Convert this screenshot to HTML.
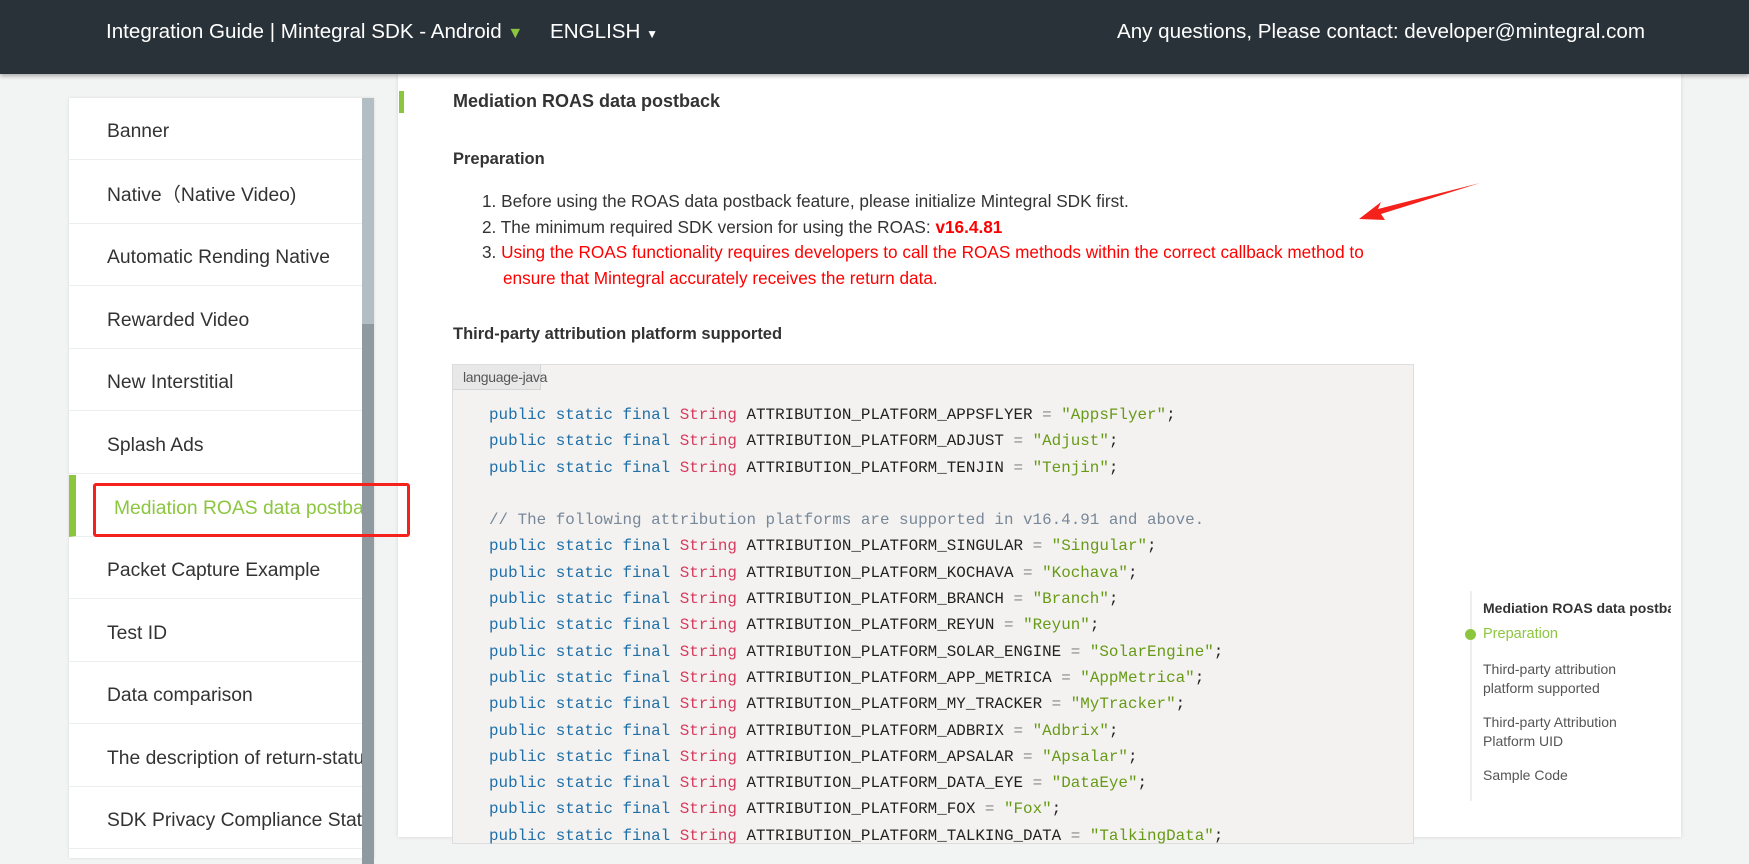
<!DOCTYPE html>
<html><head><meta charset="utf-8"><style>
*{margin:0;padding:0;box-sizing:border-box}
body{width:1749px;height:837px;overflow:hidden;background:#f2f3f3;font-family:"Liberation Sans",Arial,sans-serif;position:relative}
.hdr{position:absolute;left:0;top:0;width:1749px;height:74px;background:#283238;box-shadow:0 2px 4px rgba(0,0,0,.3);color:#fff;font-size:20.6px;z-index:5}
.hdr span{position:absolute;top:20px;white-space:nowrap}
.side{position:absolute;left:69px;top:98px;width:305px;height:760px;background:#fff;box-shadow:0 0 3px rgba(0,0,0,.1)}
.side .it{position:absolute;left:0;width:293px;height:62px;border-bottom:1px solid #eceeee;font-size:19.3px;color:#333;padding-left:38px;padding-top:3px;line-height:62px;white-space:nowrap;overflow:hidden}
.sb1{position:absolute;left:293px;top:0;width:12px;height:226px;background:#b3bec4}
.sb2{position:absolute;left:293px;top:226px;width:12px;height:540px;background:#8f9aa0}
.main{position:absolute;left:398px;top:74px;width:1283px;height:763px;background:#fff;box-shadow:0 0 4px rgba(0,0,0,.12)}
.t{position:absolute;white-space:nowrap;color:#333}
.code{position:absolute;left:452px;top:364px;width:962px;height:480px;background:#f4f2f0;border:1px solid #ddd}
.tag{position:absolute;left:0;top:0;width:88px;height:25px;background:#e8e8e8;border-right:1px solid #d5d5d5;border-bottom:1px solid #d5d5d5;font-size:14px;color:#555;line-height:24px;padding-left:10px;white-space:nowrap;letter-spacing:-.3px}
pre{position:absolute;left:36px;top:37px;font-family:"Liberation Mono",monospace;font-size:15.9px;line-height:26.3px;color:#222}
.k{color:#1f6fa8}.s{color:#d73a5e}.g{color:#679a17}.c{color:#778899}.o{color:#888}
.toc{position:absolute;font-size:14px;color:#555;white-space:nowrap}
</style></head><body>
<div class="hdr">
<span style="left:106px">Integration Guide | Mintegral SDK - Android <span style="position:static;color:#8cc63f;font-size:16px">▼</span></span>
<span style="left:550px">ENGLISH <span style="position:static;font-size:12px">▼</span></span>
<span style="right:104px">Any questions, Please contact: developer@mintegral.com</span>
</div>

<div class="side">
<div class="it" style="top:0">Banner</div>
<div class="it" style="top:64px">Native（Native Video)</div>
<div class="it" style="top:126px">Automatic Rending Native</div>
<div class="it" style="top:189px">Rewarded Video</div>
<div class="it" style="top:251px">New Interstitial</div>
<div class="it" style="top:314px">Splash Ads</div>
<div class="it" style="top:377px;color:#8cc63f;padding-left:38px;border-left:7px solid #8cc63f">Mediation ROAS data postback</div>
<div class="it" style="top:439px">Packet Capture Example</div>
<div class="it" style="top:502px">Test ID</div>
<div class="it" style="top:564px">Data comparison</div>
<div class="it" style="top:627px">The description of return-status</div>
<div class="it" style="top:689px">SDK Privacy Compliance Statement</div>
<div class="sb1"></div><div class="sb2"></div>
</div>
<div style="position:absolute;left:93px;top:483px;width:317px;height:54px;border:3px solid #f5221b;border-radius:3px;z-index:3"></div>

<div class="main"></div>
<div style="position:absolute;left:399px;top:91px;width:5px;height:22px;background:#8cc63f"></div>
<div class="t" style="left:453px;top:91px;font-size:18px;font-weight:bold">Mediation ROAS data postback</div>
<div class="t" style="left:453px;top:150px;font-size:16.5px;font-weight:bold">Preparation</div>
<div class="t" style="left:482px;top:189px;font-size:17.2px;line-height:25.5px">
1. Before using the ROAS data postback feature, please initialize Mintegral SDK first.<br>
2. The minimum required SDK version for using the ROAS: <b style="color:#f00">v16.4.81</b><br>
3. <span style="color:#f00">Using the ROAS functionality requires developers to call the ROAS methods within the correct callback method to</span><br>
<span style="color:#f00;padding-left:21px">ensure that Mintegral accurately receives the return data.</span>
</div>
<div class="t" style="left:453px;top:325px;font-size:16.5px;font-weight:bold">Third-party attribution platform supported</div>

<svg style="position:absolute;left:1350px;top:178px" width="140" height="50"><path d="M130 5 L28 31 L31 24 L9 41 L35 42 L31 36 Z" fill="#f5221b"/></svg>

<div class="code"><div class="tag">language-java</div>
<pre><span class="k">public static final</span> <span class="s">String</span> ATTRIBUTION_PLATFORM_APPSFLYER <span class="o">=</span> <span class="g">"AppsFlyer"</span>;
<span class="k">public static final</span> <span class="s">String</span> ATTRIBUTION_PLATFORM_ADJUST <span class="o">=</span> <span class="g">"Adjust"</span>;
<span class="k">public static final</span> <span class="s">String</span> ATTRIBUTION_PLATFORM_TENJIN <span class="o">=</span> <span class="g">"Tenjin"</span>;

<span class="c">// The following attribution platforms are supported in v16.4.91 and above.</span>
<span class="k">public static final</span> <span class="s">String</span> ATTRIBUTION_PLATFORM_SINGULAR <span class="o">=</span> <span class="g">"Singular"</span>;
<span class="k">public static final</span> <span class="s">String</span> ATTRIBUTION_PLATFORM_KOCHAVA <span class="o">=</span> <span class="g">"Kochava"</span>;
<span class="k">public static final</span> <span class="s">String</span> ATTRIBUTION_PLATFORM_BRANCH <span class="o">=</span> <span class="g">"Branch"</span>;
<span class="k">public static final</span> <span class="s">String</span> ATTRIBUTION_PLATFORM_REYUN <span class="o">=</span> <span class="g">"Reyun"</span>;
<span class="k">public static final</span> <span class="s">String</span> ATTRIBUTION_PLATFORM_SOLAR_ENGINE <span class="o">=</span> <span class="g">"SolarEngine"</span>;
<span class="k">public static final</span> <span class="s">String</span> ATTRIBUTION_PLATFORM_APP_METRICA <span class="o">=</span> <span class="g">"AppMetrica"</span>;
<span class="k">public static final</span> <span class="s">String</span> ATTRIBUTION_PLATFORM_MY_TRACKER <span class="o">=</span> <span class="g">"MyTracker"</span>;
<span class="k">public static final</span> <span class="s">String</span> ATTRIBUTION_PLATFORM_ADBRIX <span class="o">=</span> <span class="g">"Adbrix"</span>;
<span class="k">public static final</span> <span class="s">String</span> ATTRIBUTION_PLATFORM_APSALAR <span class="o">=</span> <span class="g">"Apsalar"</span>;
<span class="k">public static final</span> <span class="s">String</span> ATTRIBUTION_PLATFORM_DATA_EYE <span class="o">=</span> <span class="g">"DataEye"</span>;
<span class="k">public static final</span> <span class="s">String</span> ATTRIBUTION_PLATFORM_FOX <span class="o">=</span> <span class="g">"Fox"</span>;
<span class="k">public static final</span> <span class="s">String</span> ATTRIBUTION_PLATFORM_TALKING_DATA <span class="o">=</span> <span class="g">"TalkingData"</span>;</pre>
</div>

<div style="position:absolute;left:1470px;top:591px;width:2px;height:210px;background:#eee"></div>
<div style="position:absolute;left:1465px;top:629px;width:11px;height:11px;border-radius:50%;background:#8cc63f"></div>
<div style="position:absolute;left:1483px;top:600px;width:188px;overflow:hidden;white-space:nowrap;font-size:14px;font-weight:bold;color:#333">Mediation ROAS data postback</div>
<div class="toc" style="left:1483px;top:626px;font-size:14.5px;color:#8cc63f">Preparation</div>
<div class="toc" style="left:1483px;top:660px;line-height:19px">Third-party attribution<br>platform supported</div>
<div class="toc" style="left:1483px;top:713px;line-height:19px">Third-party Attribution<br>Platform UID</div>
<div class="toc" style="left:1483px;top:767px">Sample Code</div>
</body></html>
